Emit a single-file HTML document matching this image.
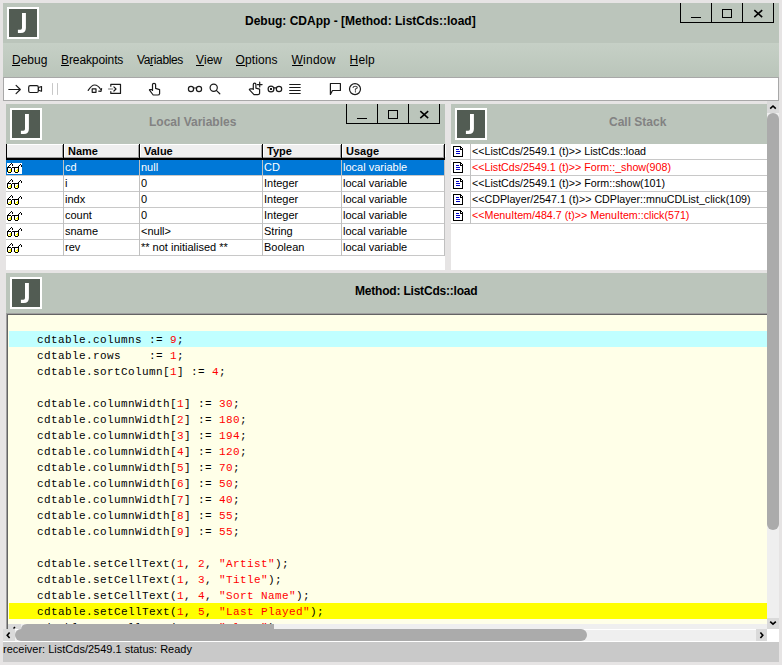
<!DOCTYPE html>
<html><head><meta charset="utf-8">
<style>
*{margin:0;padding:0;box-sizing:border-box}
html,body{width:782px;height:665px;overflow:hidden;background:#e6e4e4;font-family:"Liberation Sans",sans-serif;font-size:12px;color:#000}
.a{position:absolute}
.tb{position:absolute;background:#bbc5bb}
.jbox{position:absolute;width:32px;height:32px;border:2px solid #fff;background:#525c53}
.jbox svg{position:absolute;left:0;top:0}
.menu{position:absolute;top:53px;font-size:12px;line-height:14px;white-space:nowrap}
.menu u{text-decoration:none;position:relative}
.menu u:after{content:"";position:absolute;left:0;right:0.3px;top:12px;height:1px;background:#000}
.ptitle{position:absolute;font-weight:bold;font-size:12px;line-height:12px;color:#828282;white-space:nowrap}
.t11{position:absolute;font-size:11px;line-height:11px;white-space:nowrap}
.hd{position:absolute;font-size:11px;line-height:11px;font-weight:bold;white-space:nowrap}
.cs{position:absolute;font-size:10.7px;line-height:11px;white-space:nowrap}
.code{position:absolute;left:37px;font-family:"Liberation Mono",monospace;font-size:11px;line-height:12px;letter-spacing:0.4px;white-space:pre;color:#000}
.n{color:#f00}
</style></head>
<body>
<div class="tb" style="left:3px;top:3px;width:776px;height:40px"></div>
<div class="jbox" style="left:7px;top:7px"><svg width="28" height="28"><path d="M13 4.1H16.9V19Q16.9 24.1 11.8 24.1H8.9V20.8H11.4Q13 20.8 13 19Z" fill="#fff"/></svg></div>
<div class="a" style="left:245px;top:15px;font-weight:bold;font-size:12px;line-height:12px;white-space:nowrap">Debug: CDApp - [Method: ListCds::load]</div>
<svg class="a" style="left:680px;top:3px" width="95" height="20" shape-rendering="crispEdges"><rect x="0" y="0" width="1" height="19" fill="#000"/><rect x="31" y="0" width="1" height="19" fill="#000"/><rect x="62" y="0" width="1" height="19" fill="#000"/><rect x="93" y="0" width="1" height="19" fill="#000"/><rect x="0" y="19" width="94" height="1" fill="#000"/><rect x="11" y="14" width="10" height="1" fill="#000"/><rect x="42.5" y="6.5" width="9" height="8" fill="none" stroke="#000" stroke-width="1"/></svg>
<svg class="a" style="left:750px;top:3px" width="20" height="20"><path d="M4.3 7.2L12.2 14.2M12.2 7.2L4.3 14.2" stroke="#000" stroke-width="1.55"/></svg>
<div class="a" style="left:3px;top:43px;width:776px;height:34px;background:linear-gradient(#c6d0c6,#bac5ba)"></div>
<div class="menu" style="left:12px;letter-spacing:0px"><u>D</u>ebug</div>
<div class="menu" style="left:61px;letter-spacing:-0.1px"><u>B</u>reakpoints</div>
<div class="menu" style="left:137px;letter-spacing:-0.35px">Va<u>r</u>iables</div>
<div class="menu" style="left:196px;letter-spacing:0px"><u>V</u>iew</div>
<div class="menu" style="left:235.5px;letter-spacing:0.1px"><u>O</u>ptions</div>
<div class="menu" style="left:291.5px;letter-spacing:0.25px"><u>W</u>indow</div>
<div class="menu" style="left:349.5px;letter-spacing:0.2px"><u>H</u>elp</div>
<div class="a" style="left:3px;top:77px;width:776px;height:24px;background:#fff;border:1px solid #a8a8a8"></div>
<svg class="a" style="left:0;top:0" width="380" height="100" fill="none" stroke="#1a1a1a" stroke-width="1.2" stroke-linecap="round" stroke-linejoin="round">
<path d="M8.8 89.5H20.3M16.1 85.4L20.3 89.5L16.1 93.7"/>
<rect x="28.7" y="85.7" width="9.6" height="6.8" rx="1.5"/>
<path d="M38.5 87.5L41.5 86.5V91.2L38.5 90.2Z"/>
<path d="M52.5 83.5V94.5M57.5 83.5V94.5" stroke="#c8c8c8" stroke-width="1"/>
<path d="M88.2 90.4Q91.5 85 94.7 85Q98 85 100.5 89.3"/>
<path d="M98.8 91.2L101 91.3L101.6 88.6"/>
<rect x="92.2" y="88.9" width="3.8" height="3.4"/>
<path d="M110.8 86.2V84.3H120.5V93.4H110.8V91.6"/>
<path d="M108.6 89H112.6" stroke="#9a9a9a" stroke-width="1.4"/>
<path d="M113.9 86.9L116 89L113.9 91"/>
<path d="M152.5 90.5V84.6Q152.5 83.4 154 83.4Q155.6 83.4 155.6 84.6V88.4L159.6 89.6V93.6Q159.4 95 157.8 95H153.2L149.5 90.2V89.6H152.3"/>
<circle cx="191" cy="89" r="2.6"/><circle cx="199" cy="89" r="2.6"/><path d="M193.6 88H196.4"/>
<circle cx="213.7" cy="87.7" r="3.6"/><path d="M216.3 90.4L219.8 93.8"/>
<path d="M253.3 89.5V84.4Q253.3 83.2 254.6 83.2Q255.9 83.2 255.9 84.4V88.2L259.6 89.2V93.4Q259.4 94.6 258 94.6H254L249.3 89.6Q249.6 88.8 250.6 88.8H253.1"/>
<path d="M259.7 82.2V87M257.3 84.6H262.1"/>
<circle cx="271" cy="89" r="2.9"/><rect x="270" y="88" width="2" height="2" fill="#1a1a1a" stroke="none"/><circle cx="279" cy="89" r="2.7"/><path d="M273.9 87.8H276.3"/>
<path d="M289.7 84.5H300.2M289.7 87.5H300.2M289.7 90.5H300.2M289.7 93.5H300.2"/>
<path d="M332.5 90.5H340.4V83.5H330.4V94.4Z"/>
<circle cx="355" cy="89.1" r="5.5"/>
<path d="M353.1 87.5Q353.1 86.3 355.2 86.3Q357.3 86.3 357.3 87.5Q357.3 88.6 355.4 89V90.2M355.4 91.5V91.9" stroke="#444" stroke-width="1.1"/>
</svg>
<div class="a" style="left:6px;top:104px;width:439px;height:166px;background:#fff"></div>
<div class="tb" style="left:6px;top:104px;width:439px;height:40px"></div>
<div class="jbox" style="left:10px;top:108px"><svg width="28" height="28"><path d="M13 4.1H16.9V19Q16.9 24.1 11.8 24.1H8.9V20.8H11.4Q13 20.8 13 19Z" fill="#fff"/></svg></div>
<div class="ptitle" style="left:149px;top:116px">Local Variables</div>
<svg class="a" style="left:346px;top:104px" width="95" height="20" shape-rendering="crispEdges"><rect x="0" y="0" width="1" height="19" fill="#000"/><rect x="31" y="0" width="1" height="19" fill="#000"/><rect x="62" y="0" width="1" height="19" fill="#000"/><rect x="93" y="0" width="1" height="19" fill="#000"/><rect x="0" y="19" width="94" height="1" fill="#000"/><rect x="11" y="14" width="10" height="1" fill="#000"/><rect x="42.5" y="6.5" width="9" height="8" fill="none" stroke="#000" stroke-width="1"/></svg>
<svg class="a" style="left:416px;top:104px" width="20" height="20"><path d="M4.3 7.2L12.2 14.2M12.2 7.2L4.3 14.2" stroke="#000" stroke-width="1.55"/></svg>
<svg class="a" style="left:0;top:0" width="450" height="270" shape-rendering="crispEdges">
<rect x="6" y="144" width="439" height="16" fill="#efefef"/>
<rect x="6" y="144" width="439" height="1" fill="#fff"/>
<rect x="6" y="157" width="439" height="1" fill="#a0a0a0"/>
<rect x="6" y="158" width="439" height="2" fill="#000"/>
<rect x="6" y="144" width="1" height="15" fill="#000"/>
<rect x="62" y="145" width="1" height="13" fill="#a0a0a0"/>
<rect x="63" y="144" width="1" height="15" fill="#000"/>
<rect x="64" y="145" width="1" height="12" fill="#fff"/>
<rect x="138" y="145" width="1" height="13" fill="#a0a0a0"/>
<rect x="139" y="144" width="1" height="15" fill="#000"/>
<rect x="140" y="145" width="1" height="12" fill="#fff"/>
<rect x="261" y="145" width="1" height="13" fill="#a0a0a0"/>
<rect x="262" y="144" width="1" height="15" fill="#000"/>
<rect x="263" y="145" width="1" height="12" fill="#fff"/>
<rect x="340" y="145" width="1" height="13" fill="#a0a0a0"/>
<rect x="341" y="144" width="1" height="15" fill="#000"/>
<rect x="342" y="145" width="1" height="12" fill="#fff"/>
<rect x="443" y="145" width="1" height="13" fill="#a0a0a0"/>
<rect x="444" y="144" width="1" height="15" fill="#000"/>
<rect x="445" y="145" width="1" height="12" fill="#fff"/>
<rect x="6" y="160" width="438" height="15" fill="#0078d7"/>
<rect x="6" y="175" width="438" height="1" fill="#c8c8c8"/>
<rect x="6" y="191" width="438" height="1" fill="#c8c8c8"/>
<rect x="6" y="207" width="438" height="1" fill="#c8c8c8"/>
<rect x="6" y="223" width="438" height="1" fill="#c8c8c8"/>
<rect x="6" y="239" width="438" height="1" fill="#c8c8c8"/>
<rect x="6" y="255" width="438" height="1" fill="#c8c8c8"/>
<rect x="63" y="160" width="1" height="96" fill="#c0c0c0"/>
<rect x="139" y="160" width="1" height="96" fill="#c0c0c0"/>
<rect x="262" y="160" width="1" height="96" fill="#c0c0c0"/>
<rect x="341" y="160" width="1" height="96" fill="#c0c0c0"/>
<rect x="444" y="160" width="1" height="96" fill="#c0c0c0"/>
</svg>
<div class="hd" style="left:68px;top:146px">Name</div>
<div class="hd" style="left:144px;top:146px">Value</div>
<div class="hd" style="left:267px;top:146px">Type</div>
<div class="hd" style="left:346px;top:146px">Usage</div>
<div class="a" style="left:7px;top:163px;width:16px;height:11px"><svg width="16" height="11" shape-rendering="crispEdges"><rect x="0" y="0" width="15" height="11" fill="#fff"/><path d="M1 5h1v1h-1zM1 6h1v1h-1zM1 7h1v1h-1zM1 8h1v1h-1zM2 5h1v1h-1zM2 6h1v1h-1zM2 7h1v1h-1zM2 8h1v1h-1zM3 5h1v1h-1zM3 6h1v1h-1zM3 7h1v1h-1zM3 8h1v1h-1zM8 5h1v1h-1zM8 6h1v1h-1zM8 7h1v1h-1zM8 8h1v1h-1zM9 5h1v1h-1zM9 6h1v1h-1zM9 7h1v1h-1zM9 8h1v1h-1zM10 5h1v1h-1zM10 6h1v1h-1zM10 7h1v1h-1zM10 8h1v1h-1z" fill="#fff"/><path d="M0 4h1v1h-1zM0 5h1v1h-1zM0 6h1v1h-1zM0 7h1v1h-1zM0 8h1v1h-1zM0 4h1v1h-1zM1 4h1v1h-1zM2 4h1v1h-1zM3 4h1v1h-1zM4 5h1v1h-1zM4 6h1v1h-1zM4 7h1v1h-1zM4 8h1v1h-1zM1 9h1v1h-1zM2 9h1v1h-1zM3 9h1v1h-1zM7 4h1v1h-1zM7 5h1v1h-1zM7 6h1v1h-1zM7 7h1v1h-1zM7 8h1v1h-1zM8 4h1v1h-1zM9 4h1v1h-1zM10 4h1v1h-1zM11 3h1v1h-1zM11 4h1v1h-1zM11 5h1v1h-1zM11 6h1v1h-1zM11 7h1v1h-1zM11 8h1v1h-1zM8 9h1v1h-1zM9 9h1v1h-1zM10 9h1v1h-1zM5 4h1v1h-1zM6 4h1v1h-1zM1 3h1v1h-1zM2 2h1v1h-1zM3 1h1v1h-1zM4 0h1v1h-1zM5 1h1v1h-1zM5 2h1v1h-1zM12 2h1v1h-1zM13 1h1v1h-1zM14 2h1v1h-1zM14 3h1v1h-1z" fill="#000"/><path d="M3 6h1v1h-1zM2 7h1v1h-1zM3 7h1v1h-1zM1 8h1v1h-1zM3 8h1v1h-1zM10 6h1v1h-1zM9 7h1v1h-1zM10 7h1v1h-1zM8 8h1v1h-1zM10 8h1v1h-1z" fill="#ffff00"/></svg></div>
<div class="t11" style="left:65px;top:162px;color:#fff">cd</div>
<div class="t11" style="left:141px;top:162px;color:#fff">null</div>
<div class="t11" style="left:264px;top:162px;color:#fff">CD</div>
<div class="t11" style="left:343px;top:162px;color:#fff">local variable</div>
<div class="a" style="left:7px;top:179px;width:16px;height:11px"><svg width="16" height="11" shape-rendering="crispEdges"><path d="M1 5h1v1h-1zM1 6h1v1h-1zM1 7h1v1h-1zM1 8h1v1h-1zM2 5h1v1h-1zM2 6h1v1h-1zM2 7h1v1h-1zM2 8h1v1h-1zM3 5h1v1h-1zM3 6h1v1h-1zM3 7h1v1h-1zM3 8h1v1h-1zM8 5h1v1h-1zM8 6h1v1h-1zM8 7h1v1h-1zM8 8h1v1h-1zM9 5h1v1h-1zM9 6h1v1h-1zM9 7h1v1h-1zM9 8h1v1h-1zM10 5h1v1h-1zM10 6h1v1h-1zM10 7h1v1h-1zM10 8h1v1h-1z" fill="#fff"/><path d="M0 4h1v1h-1zM0 5h1v1h-1zM0 6h1v1h-1zM0 7h1v1h-1zM0 8h1v1h-1zM0 4h1v1h-1zM1 4h1v1h-1zM2 4h1v1h-1zM3 4h1v1h-1zM4 5h1v1h-1zM4 6h1v1h-1zM4 7h1v1h-1zM4 8h1v1h-1zM1 9h1v1h-1zM2 9h1v1h-1zM3 9h1v1h-1zM7 4h1v1h-1zM7 5h1v1h-1zM7 6h1v1h-1zM7 7h1v1h-1zM7 8h1v1h-1zM8 4h1v1h-1zM9 4h1v1h-1zM10 4h1v1h-1zM11 3h1v1h-1zM11 4h1v1h-1zM11 5h1v1h-1zM11 6h1v1h-1zM11 7h1v1h-1zM11 8h1v1h-1zM8 9h1v1h-1zM9 9h1v1h-1zM10 9h1v1h-1zM5 4h1v1h-1zM6 4h1v1h-1zM1 3h1v1h-1zM2 2h1v1h-1zM3 1h1v1h-1zM4 0h1v1h-1zM5 1h1v1h-1zM5 2h1v1h-1zM12 2h1v1h-1zM13 1h1v1h-1zM14 2h1v1h-1zM14 3h1v1h-1z" fill="#000"/><path d="M3 6h1v1h-1zM2 7h1v1h-1zM3 7h1v1h-1zM1 8h1v1h-1zM3 8h1v1h-1zM10 6h1v1h-1zM9 7h1v1h-1zM10 7h1v1h-1zM8 8h1v1h-1zM10 8h1v1h-1z" fill="#ffff00"/></svg></div>
<div class="t11" style="left:65px;top:178px;color:#000">i</div>
<div class="t11" style="left:141px;top:178px;color:#000">0</div>
<div class="t11" style="left:264px;top:178px;color:#000">Integer</div>
<div class="t11" style="left:343px;top:178px;color:#000">local variable</div>
<div class="a" style="left:7px;top:195px;width:16px;height:11px"><svg width="16" height="11" shape-rendering="crispEdges"><path d="M1 5h1v1h-1zM1 6h1v1h-1zM1 7h1v1h-1zM1 8h1v1h-1zM2 5h1v1h-1zM2 6h1v1h-1zM2 7h1v1h-1zM2 8h1v1h-1zM3 5h1v1h-1zM3 6h1v1h-1zM3 7h1v1h-1zM3 8h1v1h-1zM8 5h1v1h-1zM8 6h1v1h-1zM8 7h1v1h-1zM8 8h1v1h-1zM9 5h1v1h-1zM9 6h1v1h-1zM9 7h1v1h-1zM9 8h1v1h-1zM10 5h1v1h-1zM10 6h1v1h-1zM10 7h1v1h-1zM10 8h1v1h-1z" fill="#fff"/><path d="M0 4h1v1h-1zM0 5h1v1h-1zM0 6h1v1h-1zM0 7h1v1h-1zM0 8h1v1h-1zM0 4h1v1h-1zM1 4h1v1h-1zM2 4h1v1h-1zM3 4h1v1h-1zM4 5h1v1h-1zM4 6h1v1h-1zM4 7h1v1h-1zM4 8h1v1h-1zM1 9h1v1h-1zM2 9h1v1h-1zM3 9h1v1h-1zM7 4h1v1h-1zM7 5h1v1h-1zM7 6h1v1h-1zM7 7h1v1h-1zM7 8h1v1h-1zM8 4h1v1h-1zM9 4h1v1h-1zM10 4h1v1h-1zM11 3h1v1h-1zM11 4h1v1h-1zM11 5h1v1h-1zM11 6h1v1h-1zM11 7h1v1h-1zM11 8h1v1h-1zM8 9h1v1h-1zM9 9h1v1h-1zM10 9h1v1h-1zM5 4h1v1h-1zM6 4h1v1h-1zM1 3h1v1h-1zM2 2h1v1h-1zM3 1h1v1h-1zM4 0h1v1h-1zM5 1h1v1h-1zM5 2h1v1h-1zM12 2h1v1h-1zM13 1h1v1h-1zM14 2h1v1h-1zM14 3h1v1h-1z" fill="#000"/><path d="M3 6h1v1h-1zM2 7h1v1h-1zM3 7h1v1h-1zM1 8h1v1h-1zM3 8h1v1h-1zM10 6h1v1h-1zM9 7h1v1h-1zM10 7h1v1h-1zM8 8h1v1h-1zM10 8h1v1h-1z" fill="#ffff00"/></svg></div>
<div class="t11" style="left:65px;top:194px;color:#000">indx</div>
<div class="t11" style="left:141px;top:194px;color:#000">0</div>
<div class="t11" style="left:264px;top:194px;color:#000">Integer</div>
<div class="t11" style="left:343px;top:194px;color:#000">local variable</div>
<div class="a" style="left:7px;top:211px;width:16px;height:11px"><svg width="16" height="11" shape-rendering="crispEdges"><path d="M1 5h1v1h-1zM1 6h1v1h-1zM1 7h1v1h-1zM1 8h1v1h-1zM2 5h1v1h-1zM2 6h1v1h-1zM2 7h1v1h-1zM2 8h1v1h-1zM3 5h1v1h-1zM3 6h1v1h-1zM3 7h1v1h-1zM3 8h1v1h-1zM8 5h1v1h-1zM8 6h1v1h-1zM8 7h1v1h-1zM8 8h1v1h-1zM9 5h1v1h-1zM9 6h1v1h-1zM9 7h1v1h-1zM9 8h1v1h-1zM10 5h1v1h-1zM10 6h1v1h-1zM10 7h1v1h-1zM10 8h1v1h-1z" fill="#fff"/><path d="M0 4h1v1h-1zM0 5h1v1h-1zM0 6h1v1h-1zM0 7h1v1h-1zM0 8h1v1h-1zM0 4h1v1h-1zM1 4h1v1h-1zM2 4h1v1h-1zM3 4h1v1h-1zM4 5h1v1h-1zM4 6h1v1h-1zM4 7h1v1h-1zM4 8h1v1h-1zM1 9h1v1h-1zM2 9h1v1h-1zM3 9h1v1h-1zM7 4h1v1h-1zM7 5h1v1h-1zM7 6h1v1h-1zM7 7h1v1h-1zM7 8h1v1h-1zM8 4h1v1h-1zM9 4h1v1h-1zM10 4h1v1h-1zM11 3h1v1h-1zM11 4h1v1h-1zM11 5h1v1h-1zM11 6h1v1h-1zM11 7h1v1h-1zM11 8h1v1h-1zM8 9h1v1h-1zM9 9h1v1h-1zM10 9h1v1h-1zM5 4h1v1h-1zM6 4h1v1h-1zM1 3h1v1h-1zM2 2h1v1h-1zM3 1h1v1h-1zM4 0h1v1h-1zM5 1h1v1h-1zM5 2h1v1h-1zM12 2h1v1h-1zM13 1h1v1h-1zM14 2h1v1h-1zM14 3h1v1h-1z" fill="#000"/><path d="M3 6h1v1h-1zM2 7h1v1h-1zM3 7h1v1h-1zM1 8h1v1h-1zM3 8h1v1h-1zM10 6h1v1h-1zM9 7h1v1h-1zM10 7h1v1h-1zM8 8h1v1h-1zM10 8h1v1h-1z" fill="#ffff00"/></svg></div>
<div class="t11" style="left:65px;top:210px;color:#000">count</div>
<div class="t11" style="left:141px;top:210px;color:#000">0</div>
<div class="t11" style="left:264px;top:210px;color:#000">Integer</div>
<div class="t11" style="left:343px;top:210px;color:#000">local variable</div>
<div class="a" style="left:7px;top:227px;width:16px;height:11px"><svg width="16" height="11" shape-rendering="crispEdges"><path d="M1 5h1v1h-1zM1 6h1v1h-1zM1 7h1v1h-1zM1 8h1v1h-1zM2 5h1v1h-1zM2 6h1v1h-1zM2 7h1v1h-1zM2 8h1v1h-1zM3 5h1v1h-1zM3 6h1v1h-1zM3 7h1v1h-1zM3 8h1v1h-1zM8 5h1v1h-1zM8 6h1v1h-1zM8 7h1v1h-1zM8 8h1v1h-1zM9 5h1v1h-1zM9 6h1v1h-1zM9 7h1v1h-1zM9 8h1v1h-1zM10 5h1v1h-1zM10 6h1v1h-1zM10 7h1v1h-1zM10 8h1v1h-1z" fill="#fff"/><path d="M0 4h1v1h-1zM0 5h1v1h-1zM0 6h1v1h-1zM0 7h1v1h-1zM0 8h1v1h-1zM0 4h1v1h-1zM1 4h1v1h-1zM2 4h1v1h-1zM3 4h1v1h-1zM4 5h1v1h-1zM4 6h1v1h-1zM4 7h1v1h-1zM4 8h1v1h-1zM1 9h1v1h-1zM2 9h1v1h-1zM3 9h1v1h-1zM7 4h1v1h-1zM7 5h1v1h-1zM7 6h1v1h-1zM7 7h1v1h-1zM7 8h1v1h-1zM8 4h1v1h-1zM9 4h1v1h-1zM10 4h1v1h-1zM11 3h1v1h-1zM11 4h1v1h-1zM11 5h1v1h-1zM11 6h1v1h-1zM11 7h1v1h-1zM11 8h1v1h-1zM8 9h1v1h-1zM9 9h1v1h-1zM10 9h1v1h-1zM5 4h1v1h-1zM6 4h1v1h-1zM1 3h1v1h-1zM2 2h1v1h-1zM3 1h1v1h-1zM4 0h1v1h-1zM5 1h1v1h-1zM5 2h1v1h-1zM12 2h1v1h-1zM13 1h1v1h-1zM14 2h1v1h-1zM14 3h1v1h-1z" fill="#000"/><path d="M3 6h1v1h-1zM2 7h1v1h-1zM3 7h1v1h-1zM1 8h1v1h-1zM3 8h1v1h-1zM10 6h1v1h-1zM9 7h1v1h-1zM10 7h1v1h-1zM8 8h1v1h-1zM10 8h1v1h-1z" fill="#ffff00"/></svg></div>
<div class="t11" style="left:65px;top:226px;color:#000">sname</div>
<div class="t11" style="left:141px;top:226px;color:#000">&lt;null&gt;</div>
<div class="t11" style="left:264px;top:226px;color:#000">String</div>
<div class="t11" style="left:343px;top:226px;color:#000">local variable</div>
<div class="a" style="left:7px;top:243px;width:16px;height:11px"><svg width="16" height="11" shape-rendering="crispEdges"><path d="M1 5h1v1h-1zM1 6h1v1h-1zM1 7h1v1h-1zM1 8h1v1h-1zM2 5h1v1h-1zM2 6h1v1h-1zM2 7h1v1h-1zM2 8h1v1h-1zM3 5h1v1h-1zM3 6h1v1h-1zM3 7h1v1h-1zM3 8h1v1h-1zM8 5h1v1h-1zM8 6h1v1h-1zM8 7h1v1h-1zM8 8h1v1h-1zM9 5h1v1h-1zM9 6h1v1h-1zM9 7h1v1h-1zM9 8h1v1h-1zM10 5h1v1h-1zM10 6h1v1h-1zM10 7h1v1h-1zM10 8h1v1h-1z" fill="#fff"/><path d="M0 4h1v1h-1zM0 5h1v1h-1zM0 6h1v1h-1zM0 7h1v1h-1zM0 8h1v1h-1zM0 4h1v1h-1zM1 4h1v1h-1zM2 4h1v1h-1zM3 4h1v1h-1zM4 5h1v1h-1zM4 6h1v1h-1zM4 7h1v1h-1zM4 8h1v1h-1zM1 9h1v1h-1zM2 9h1v1h-1zM3 9h1v1h-1zM7 4h1v1h-1zM7 5h1v1h-1zM7 6h1v1h-1zM7 7h1v1h-1zM7 8h1v1h-1zM8 4h1v1h-1zM9 4h1v1h-1zM10 4h1v1h-1zM11 3h1v1h-1zM11 4h1v1h-1zM11 5h1v1h-1zM11 6h1v1h-1zM11 7h1v1h-1zM11 8h1v1h-1zM8 9h1v1h-1zM9 9h1v1h-1zM10 9h1v1h-1zM5 4h1v1h-1zM6 4h1v1h-1zM1 3h1v1h-1zM2 2h1v1h-1zM3 1h1v1h-1zM4 0h1v1h-1zM5 1h1v1h-1zM5 2h1v1h-1zM12 2h1v1h-1zM13 1h1v1h-1zM14 2h1v1h-1zM14 3h1v1h-1z" fill="#000"/><path d="M3 6h1v1h-1zM2 7h1v1h-1zM3 7h1v1h-1zM1 8h1v1h-1zM3 8h1v1h-1zM10 6h1v1h-1zM9 7h1v1h-1zM10 7h1v1h-1zM8 8h1v1h-1zM10 8h1v1h-1z" fill="#ffff00"/></svg></div>
<div class="t11" style="left:65px;top:242px;color:#000">rev</div>
<div class="t11" style="left:141px;top:242px;color:#000">** not initialised **</div>
<div class="t11" style="left:264px;top:242px;color:#000">Boolean</div>
<div class="t11" style="left:343px;top:242px;color:#000">local variable</div>
<div class="a" style="left:451px;top:104px;width:316px;height:166px;background:#fff"></div>
<div class="tb" style="left:451px;top:104px;width:316px;height:40px"></div>
<div class="jbox" style="left:455px;top:108px"><svg width="28" height="28"><path d="M13 4.1H16.9V19Q16.9 24.1 11.8 24.1H8.9V20.8H11.4Q13 20.8 13 19Z" fill="#fff"/></svg></div>
<div class="ptitle" style="left:609px;top:116px">Call Stack</div>
<svg class="a" style="left:0;top:0" width="770" height="270" shape-rendering="crispEdges">
<rect x="451" y="159" width="316" height="1" fill="#c8c8c8"/>
<rect x="451" y="175" width="316" height="1" fill="#c8c8c8"/>
<rect x="451" y="191" width="316" height="1" fill="#c8c8c8"/>
<rect x="451" y="207" width="316" height="1" fill="#c8c8c8"/>
<rect x="451" y="223" width="316" height="1" fill="#c8c8c8"/>
<rect x="470" y="144" width="1" height="80" fill="#c0c0c0"/>
</svg>
<div class="a" style="left:451px;top:144px"><svg width="13" height="13" shape-rendering="crispEdges"><path d="M3 3h1v1h-1zM3 4h1v1h-1zM3 5h1v1h-1zM3 6h1v1h-1zM3 7h1v1h-1zM3 8h1v1h-1zM3 9h1v1h-1zM3 10h1v1h-1zM3 11h1v1h-1zM4 3h1v1h-1zM4 4h1v1h-1zM4 5h1v1h-1zM4 6h1v1h-1zM4 7h1v1h-1zM4 8h1v1h-1zM4 9h1v1h-1zM4 10h1v1h-1zM4 11h1v1h-1zM5 3h1v1h-1zM5 4h1v1h-1zM5 5h1v1h-1zM5 6h1v1h-1zM5 7h1v1h-1zM5 8h1v1h-1zM5 9h1v1h-1zM5 10h1v1h-1zM5 11h1v1h-1zM6 3h1v1h-1zM6 4h1v1h-1zM6 5h1v1h-1zM6 6h1v1h-1zM6 7h1v1h-1zM6 8h1v1h-1zM6 9h1v1h-1zM6 10h1v1h-1zM6 11h1v1h-1zM7 3h1v1h-1zM7 4h1v1h-1zM7 5h1v1h-1zM7 6h1v1h-1zM7 7h1v1h-1zM7 8h1v1h-1zM7 9h1v1h-1zM7 10h1v1h-1zM7 11h1v1h-1zM8 3h1v1h-1zM8 4h1v1h-1zM8 5h1v1h-1zM8 6h1v1h-1zM8 7h1v1h-1zM8 8h1v1h-1zM8 9h1v1h-1zM8 10h1v1h-1zM8 11h1v1h-1zM9 3h1v1h-1zM9 4h1v1h-1zM9 5h1v1h-1zM9 6h1v1h-1zM9 7h1v1h-1zM9 8h1v1h-1zM9 9h1v1h-1zM9 10h1v1h-1zM9 11h1v1h-1zM10 3h1v1h-1zM10 4h1v1h-1zM10 5h1v1h-1zM10 6h1v1h-1zM10 7h1v1h-1zM10 8h1v1h-1zM10 9h1v1h-1zM10 10h1v1h-1zM10 11h1v1h-1z" fill="#fff"/><path d="M2 2h1v1h-1zM2 3h1v1h-1zM2 4h1v1h-1zM2 5h1v1h-1zM2 6h1v1h-1zM2 7h1v1h-1zM2 8h1v1h-1zM2 9h1v1h-1zM2 10h1v1h-1zM2 11h1v1h-1zM2 12h1v1h-1zM2 2h1v1h-1zM3 2h1v1h-1zM4 2h1v1h-1zM5 2h1v1h-1zM6 2h1v1h-1zM7 2h1v1h-1zM8 2h1v1h-1zM9 2h1v1h-1zM10 3h1v1h-1zM11 4h1v1h-1zM11 5h1v1h-1zM11 6h1v1h-1zM11 7h1v1h-1zM11 8h1v1h-1zM11 9h1v1h-1zM11 10h1v1h-1zM11 11h1v1h-1zM11 12h1v1h-1zM2 12h1v1h-1zM3 12h1v1h-1zM4 12h1v1h-1zM5 12h1v1h-1zM6 12h1v1h-1zM7 12h1v1h-1zM8 12h1v1h-1zM9 12h1v1h-1zM10 12h1v1h-1zM11 12h1v1h-1zM9 3h1v1h-1zM9 4h1v1h-1zM9 5h1v1h-1zM10 5h1v1h-1z" fill="#000"/><path d="M5 5h1v1h-1zM6 5h1v1h-1zM7 5h1v1h-1zM5 7h1v1h-1zM6 7h1v1h-1zM7 7h1v1h-1zM8 7h1v1h-1zM5 9h1v1h-1zM6 9h1v1h-1zM7 9h1v1h-1zM8 9h1v1h-1z" fill="#0000c8"/></svg></div>
<div class="cs" style="left:472px;top:146px;color:#000">&lt;&lt;ListCds/2549.1 (t)&gt;&gt; ListCds::load</div>
<div class="a" style="left:451px;top:160px"><svg width="13" height="13" shape-rendering="crispEdges"><path d="M3 3h1v1h-1zM3 4h1v1h-1zM3 5h1v1h-1zM3 6h1v1h-1zM3 7h1v1h-1zM3 8h1v1h-1zM3 9h1v1h-1zM3 10h1v1h-1zM3 11h1v1h-1zM4 3h1v1h-1zM4 4h1v1h-1zM4 5h1v1h-1zM4 6h1v1h-1zM4 7h1v1h-1zM4 8h1v1h-1zM4 9h1v1h-1zM4 10h1v1h-1zM4 11h1v1h-1zM5 3h1v1h-1zM5 4h1v1h-1zM5 5h1v1h-1zM5 6h1v1h-1zM5 7h1v1h-1zM5 8h1v1h-1zM5 9h1v1h-1zM5 10h1v1h-1zM5 11h1v1h-1zM6 3h1v1h-1zM6 4h1v1h-1zM6 5h1v1h-1zM6 6h1v1h-1zM6 7h1v1h-1zM6 8h1v1h-1zM6 9h1v1h-1zM6 10h1v1h-1zM6 11h1v1h-1zM7 3h1v1h-1zM7 4h1v1h-1zM7 5h1v1h-1zM7 6h1v1h-1zM7 7h1v1h-1zM7 8h1v1h-1zM7 9h1v1h-1zM7 10h1v1h-1zM7 11h1v1h-1zM8 3h1v1h-1zM8 4h1v1h-1zM8 5h1v1h-1zM8 6h1v1h-1zM8 7h1v1h-1zM8 8h1v1h-1zM8 9h1v1h-1zM8 10h1v1h-1zM8 11h1v1h-1zM9 3h1v1h-1zM9 4h1v1h-1zM9 5h1v1h-1zM9 6h1v1h-1zM9 7h1v1h-1zM9 8h1v1h-1zM9 9h1v1h-1zM9 10h1v1h-1zM9 11h1v1h-1zM10 3h1v1h-1zM10 4h1v1h-1zM10 5h1v1h-1zM10 6h1v1h-1zM10 7h1v1h-1zM10 8h1v1h-1zM10 9h1v1h-1zM10 10h1v1h-1zM10 11h1v1h-1z" fill="#fff"/><path d="M2 2h1v1h-1zM2 3h1v1h-1zM2 4h1v1h-1zM2 5h1v1h-1zM2 6h1v1h-1zM2 7h1v1h-1zM2 8h1v1h-1zM2 9h1v1h-1zM2 10h1v1h-1zM2 11h1v1h-1zM2 12h1v1h-1zM2 2h1v1h-1zM3 2h1v1h-1zM4 2h1v1h-1zM5 2h1v1h-1zM6 2h1v1h-1zM7 2h1v1h-1zM8 2h1v1h-1zM9 2h1v1h-1zM10 3h1v1h-1zM11 4h1v1h-1zM11 5h1v1h-1zM11 6h1v1h-1zM11 7h1v1h-1zM11 8h1v1h-1zM11 9h1v1h-1zM11 10h1v1h-1zM11 11h1v1h-1zM11 12h1v1h-1zM2 12h1v1h-1zM3 12h1v1h-1zM4 12h1v1h-1zM5 12h1v1h-1zM6 12h1v1h-1zM7 12h1v1h-1zM8 12h1v1h-1zM9 12h1v1h-1zM10 12h1v1h-1zM11 12h1v1h-1zM9 3h1v1h-1zM9 4h1v1h-1zM9 5h1v1h-1zM10 5h1v1h-1z" fill="#000"/><path d="M5 5h1v1h-1zM6 5h1v1h-1zM7 5h1v1h-1zM5 7h1v1h-1zM6 7h1v1h-1zM7 7h1v1h-1zM8 7h1v1h-1zM5 9h1v1h-1zM6 9h1v1h-1zM7 9h1v1h-1zM8 9h1v1h-1z" fill="#0000c8"/></svg></div>
<div class="cs" style="left:472px;top:162px;color:#ff0000">&lt;&lt;ListCds/2549.1 (t)&gt;&gt; Form::_show(908)</div>
<div class="a" style="left:451px;top:176px"><svg width="13" height="13" shape-rendering="crispEdges"><path d="M3 3h1v1h-1zM3 4h1v1h-1zM3 5h1v1h-1zM3 6h1v1h-1zM3 7h1v1h-1zM3 8h1v1h-1zM3 9h1v1h-1zM3 10h1v1h-1zM3 11h1v1h-1zM4 3h1v1h-1zM4 4h1v1h-1zM4 5h1v1h-1zM4 6h1v1h-1zM4 7h1v1h-1zM4 8h1v1h-1zM4 9h1v1h-1zM4 10h1v1h-1zM4 11h1v1h-1zM5 3h1v1h-1zM5 4h1v1h-1zM5 5h1v1h-1zM5 6h1v1h-1zM5 7h1v1h-1zM5 8h1v1h-1zM5 9h1v1h-1zM5 10h1v1h-1zM5 11h1v1h-1zM6 3h1v1h-1zM6 4h1v1h-1zM6 5h1v1h-1zM6 6h1v1h-1zM6 7h1v1h-1zM6 8h1v1h-1zM6 9h1v1h-1zM6 10h1v1h-1zM6 11h1v1h-1zM7 3h1v1h-1zM7 4h1v1h-1zM7 5h1v1h-1zM7 6h1v1h-1zM7 7h1v1h-1zM7 8h1v1h-1zM7 9h1v1h-1zM7 10h1v1h-1zM7 11h1v1h-1zM8 3h1v1h-1zM8 4h1v1h-1zM8 5h1v1h-1zM8 6h1v1h-1zM8 7h1v1h-1zM8 8h1v1h-1zM8 9h1v1h-1zM8 10h1v1h-1zM8 11h1v1h-1zM9 3h1v1h-1zM9 4h1v1h-1zM9 5h1v1h-1zM9 6h1v1h-1zM9 7h1v1h-1zM9 8h1v1h-1zM9 9h1v1h-1zM9 10h1v1h-1zM9 11h1v1h-1zM10 3h1v1h-1zM10 4h1v1h-1zM10 5h1v1h-1zM10 6h1v1h-1zM10 7h1v1h-1zM10 8h1v1h-1zM10 9h1v1h-1zM10 10h1v1h-1zM10 11h1v1h-1z" fill="#fff"/><path d="M2 2h1v1h-1zM2 3h1v1h-1zM2 4h1v1h-1zM2 5h1v1h-1zM2 6h1v1h-1zM2 7h1v1h-1zM2 8h1v1h-1zM2 9h1v1h-1zM2 10h1v1h-1zM2 11h1v1h-1zM2 12h1v1h-1zM2 2h1v1h-1zM3 2h1v1h-1zM4 2h1v1h-1zM5 2h1v1h-1zM6 2h1v1h-1zM7 2h1v1h-1zM8 2h1v1h-1zM9 2h1v1h-1zM10 3h1v1h-1zM11 4h1v1h-1zM11 5h1v1h-1zM11 6h1v1h-1zM11 7h1v1h-1zM11 8h1v1h-1zM11 9h1v1h-1zM11 10h1v1h-1zM11 11h1v1h-1zM11 12h1v1h-1zM2 12h1v1h-1zM3 12h1v1h-1zM4 12h1v1h-1zM5 12h1v1h-1zM6 12h1v1h-1zM7 12h1v1h-1zM8 12h1v1h-1zM9 12h1v1h-1zM10 12h1v1h-1zM11 12h1v1h-1zM9 3h1v1h-1zM9 4h1v1h-1zM9 5h1v1h-1zM10 5h1v1h-1z" fill="#000"/><path d="M5 5h1v1h-1zM6 5h1v1h-1zM7 5h1v1h-1zM5 7h1v1h-1zM6 7h1v1h-1zM7 7h1v1h-1zM8 7h1v1h-1zM5 9h1v1h-1zM6 9h1v1h-1zM7 9h1v1h-1zM8 9h1v1h-1z" fill="#0000c8"/></svg></div>
<div class="cs" style="left:472px;top:178px;color:#000">&lt;&lt;ListCds/2549.1 (t)&gt;&gt; Form::show(101)</div>
<div class="a" style="left:451px;top:192px"><svg width="13" height="13" shape-rendering="crispEdges"><path d="M3 3h1v1h-1zM3 4h1v1h-1zM3 5h1v1h-1zM3 6h1v1h-1zM3 7h1v1h-1zM3 8h1v1h-1zM3 9h1v1h-1zM3 10h1v1h-1zM3 11h1v1h-1zM4 3h1v1h-1zM4 4h1v1h-1zM4 5h1v1h-1zM4 6h1v1h-1zM4 7h1v1h-1zM4 8h1v1h-1zM4 9h1v1h-1zM4 10h1v1h-1zM4 11h1v1h-1zM5 3h1v1h-1zM5 4h1v1h-1zM5 5h1v1h-1zM5 6h1v1h-1zM5 7h1v1h-1zM5 8h1v1h-1zM5 9h1v1h-1zM5 10h1v1h-1zM5 11h1v1h-1zM6 3h1v1h-1zM6 4h1v1h-1zM6 5h1v1h-1zM6 6h1v1h-1zM6 7h1v1h-1zM6 8h1v1h-1zM6 9h1v1h-1zM6 10h1v1h-1zM6 11h1v1h-1zM7 3h1v1h-1zM7 4h1v1h-1zM7 5h1v1h-1zM7 6h1v1h-1zM7 7h1v1h-1zM7 8h1v1h-1zM7 9h1v1h-1zM7 10h1v1h-1zM7 11h1v1h-1zM8 3h1v1h-1zM8 4h1v1h-1zM8 5h1v1h-1zM8 6h1v1h-1zM8 7h1v1h-1zM8 8h1v1h-1zM8 9h1v1h-1zM8 10h1v1h-1zM8 11h1v1h-1zM9 3h1v1h-1zM9 4h1v1h-1zM9 5h1v1h-1zM9 6h1v1h-1zM9 7h1v1h-1zM9 8h1v1h-1zM9 9h1v1h-1zM9 10h1v1h-1zM9 11h1v1h-1zM10 3h1v1h-1zM10 4h1v1h-1zM10 5h1v1h-1zM10 6h1v1h-1zM10 7h1v1h-1zM10 8h1v1h-1zM10 9h1v1h-1zM10 10h1v1h-1zM10 11h1v1h-1z" fill="#fff"/><path d="M2 2h1v1h-1zM2 3h1v1h-1zM2 4h1v1h-1zM2 5h1v1h-1zM2 6h1v1h-1zM2 7h1v1h-1zM2 8h1v1h-1zM2 9h1v1h-1zM2 10h1v1h-1zM2 11h1v1h-1zM2 12h1v1h-1zM2 2h1v1h-1zM3 2h1v1h-1zM4 2h1v1h-1zM5 2h1v1h-1zM6 2h1v1h-1zM7 2h1v1h-1zM8 2h1v1h-1zM9 2h1v1h-1zM10 3h1v1h-1zM11 4h1v1h-1zM11 5h1v1h-1zM11 6h1v1h-1zM11 7h1v1h-1zM11 8h1v1h-1zM11 9h1v1h-1zM11 10h1v1h-1zM11 11h1v1h-1zM11 12h1v1h-1zM2 12h1v1h-1zM3 12h1v1h-1zM4 12h1v1h-1zM5 12h1v1h-1zM6 12h1v1h-1zM7 12h1v1h-1zM8 12h1v1h-1zM9 12h1v1h-1zM10 12h1v1h-1zM11 12h1v1h-1zM9 3h1v1h-1zM9 4h1v1h-1zM9 5h1v1h-1zM10 5h1v1h-1z" fill="#000"/><path d="M5 5h1v1h-1zM6 5h1v1h-1zM7 5h1v1h-1zM5 7h1v1h-1zM6 7h1v1h-1zM7 7h1v1h-1zM8 7h1v1h-1zM5 9h1v1h-1zM6 9h1v1h-1zM7 9h1v1h-1zM8 9h1v1h-1z" fill="#0000c8"/></svg></div>
<div class="cs" style="left:472px;top:194px;color:#000">&lt;&lt;CDPlayer/2547.1 (t)&gt;&gt; CDPlayer::mnuCDList_click(109)</div>
<div class="a" style="left:451px;top:208px"><svg width="13" height="13" shape-rendering="crispEdges"><path d="M3 3h1v1h-1zM3 4h1v1h-1zM3 5h1v1h-1zM3 6h1v1h-1zM3 7h1v1h-1zM3 8h1v1h-1zM3 9h1v1h-1zM3 10h1v1h-1zM3 11h1v1h-1zM4 3h1v1h-1zM4 4h1v1h-1zM4 5h1v1h-1zM4 6h1v1h-1zM4 7h1v1h-1zM4 8h1v1h-1zM4 9h1v1h-1zM4 10h1v1h-1zM4 11h1v1h-1zM5 3h1v1h-1zM5 4h1v1h-1zM5 5h1v1h-1zM5 6h1v1h-1zM5 7h1v1h-1zM5 8h1v1h-1zM5 9h1v1h-1zM5 10h1v1h-1zM5 11h1v1h-1zM6 3h1v1h-1zM6 4h1v1h-1zM6 5h1v1h-1zM6 6h1v1h-1zM6 7h1v1h-1zM6 8h1v1h-1zM6 9h1v1h-1zM6 10h1v1h-1zM6 11h1v1h-1zM7 3h1v1h-1zM7 4h1v1h-1zM7 5h1v1h-1zM7 6h1v1h-1zM7 7h1v1h-1zM7 8h1v1h-1zM7 9h1v1h-1zM7 10h1v1h-1zM7 11h1v1h-1zM8 3h1v1h-1zM8 4h1v1h-1zM8 5h1v1h-1zM8 6h1v1h-1zM8 7h1v1h-1zM8 8h1v1h-1zM8 9h1v1h-1zM8 10h1v1h-1zM8 11h1v1h-1zM9 3h1v1h-1zM9 4h1v1h-1zM9 5h1v1h-1zM9 6h1v1h-1zM9 7h1v1h-1zM9 8h1v1h-1zM9 9h1v1h-1zM9 10h1v1h-1zM9 11h1v1h-1zM10 3h1v1h-1zM10 4h1v1h-1zM10 5h1v1h-1zM10 6h1v1h-1zM10 7h1v1h-1zM10 8h1v1h-1zM10 9h1v1h-1zM10 10h1v1h-1zM10 11h1v1h-1z" fill="#fff"/><path d="M2 2h1v1h-1zM2 3h1v1h-1zM2 4h1v1h-1zM2 5h1v1h-1zM2 6h1v1h-1zM2 7h1v1h-1zM2 8h1v1h-1zM2 9h1v1h-1zM2 10h1v1h-1zM2 11h1v1h-1zM2 12h1v1h-1zM2 2h1v1h-1zM3 2h1v1h-1zM4 2h1v1h-1zM5 2h1v1h-1zM6 2h1v1h-1zM7 2h1v1h-1zM8 2h1v1h-1zM9 2h1v1h-1zM10 3h1v1h-1zM11 4h1v1h-1zM11 5h1v1h-1zM11 6h1v1h-1zM11 7h1v1h-1zM11 8h1v1h-1zM11 9h1v1h-1zM11 10h1v1h-1zM11 11h1v1h-1zM11 12h1v1h-1zM2 12h1v1h-1zM3 12h1v1h-1zM4 12h1v1h-1zM5 12h1v1h-1zM6 12h1v1h-1zM7 12h1v1h-1zM8 12h1v1h-1zM9 12h1v1h-1zM10 12h1v1h-1zM11 12h1v1h-1zM9 3h1v1h-1zM9 4h1v1h-1zM9 5h1v1h-1zM10 5h1v1h-1z" fill="#000"/><path d="M5 5h1v1h-1zM6 5h1v1h-1zM7 5h1v1h-1zM5 7h1v1h-1zM6 7h1v1h-1zM7 7h1v1h-1zM8 7h1v1h-1zM5 9h1v1h-1zM6 9h1v1h-1zM7 9h1v1h-1zM8 9h1v1h-1z" fill="#0000c8"/></svg></div>
<div class="cs" style="left:472px;top:210px;color:#ff0000">&lt;&lt;MenuItem/484.7 (t)&gt;&gt; MenuItem::click(571)</div>
<div class="tb" style="left:6px;top:273px;width:761px;height:40px"></div>
<div class="jbox" style="left:10px;top:277px"><svg width="28" height="28"><path d="M13 4.1H16.9V19Q16.9 24.1 11.8 24.1H8.9V20.8H11.4Q13 20.8 13 19Z" fill="#fff"/></svg></div>
<div class="ptitle" style="left:355px;top:285px;color:#000;letter-spacing:-0.2px">Method: ListCds::load</div>
<div class="a" style="left:6px;top:313px;width:761px;height:316px;background:#ffffe8;border-left:1px solid #a0a0a0;border-top:1px solid #a0a0a0;box-shadow:inset 1px 1px 0 #646464"></div>
<div class="a" style="left:9px;top:331px;width:758px;height:16px;background:#c0ffff"></div>
<div class="a" style="left:9px;top:603px;width:758px;height:16px;background:#ffff00"></div>
<div class="code" style="top:334px">cdtable.columns := <span class="n">9</span>;</div>
<div class="code" style="top:350px">cdtable.rows    := <span class="n">1</span>;</div>
<div class="code" style="top:366px">cdtable.sortColumn[<span class="n">1</span>] := <span class="n">4</span>;</div>
<div class="code" style="top:398px">cdtable.columnWidth[<span class="n">1</span>] := <span class="n">30</span>;</div>
<div class="code" style="top:414px">cdtable.columnWidth[<span class="n">2</span>] := <span class="n">180</span>;</div>
<div class="code" style="top:430px">cdtable.columnWidth[<span class="n">3</span>] := <span class="n">194</span>;</div>
<div class="code" style="top:446px">cdtable.columnWidth[<span class="n">4</span>] := <span class="n">120</span>;</div>
<div class="code" style="top:462px">cdtable.columnWidth[<span class="n">5</span>] := <span class="n">70</span>;</div>
<div class="code" style="top:478px">cdtable.columnWidth[<span class="n">6</span>] := <span class="n">50</span>;</div>
<div class="code" style="top:494px">cdtable.columnWidth[<span class="n">7</span>] := <span class="n">40</span>;</div>
<div class="code" style="top:510px">cdtable.columnWidth[<span class="n">8</span>] := <span class="n">55</span>;</div>
<div class="code" style="top:526px">cdtable.columnWidth[<span class="n">9</span>] := <span class="n">55</span>;</div>
<div class="code" style="top:558px">cdtable.setCellText(<span class="n">1</span>, <span class="n">2</span>, <span class="n">&quot;Artist&quot;</span>);</div>
<div class="code" style="top:574px">cdtable.setCellText(<span class="n">1</span>, <span class="n">3</span>, <span class="n">&quot;Title&quot;</span>);</div>
<div class="code" style="top:590px">cdtable.setCellText(<span class="n">1</span>, <span class="n">4</span>, <span class="n">&quot;Sort Name&quot;</span>);</div>
<div class="code" style="top:606px">cdtable.setCellText(<span class="n">1</span>, <span class="n">5</span>, <span class="n">&quot;Last Played&quot;</span>);</div>
<div class="code" style="top:622px">cdtable.setCellText(<span class="n">1</span>, <span class="n">6</span>, <span class="n">&quot;Plays&quot;</span>);</div>
<svg class="a" style="left:0;top:0" width="782" height="665">
<rect x="767" y="101" width="12" height="528" fill="#efefef" shape-rendering="crispEdges"/>
<rect x="767" y="101" width="12" height="12" fill="#dadada" shape-rendering="crispEdges"/>
<path d="M770.2 108.6L773 106L775.8 108.6" fill="none" stroke="#000" stroke-width="1.6"/>
<rect x="767" y="113" width="12" height="417" rx="6" fill="#ababab"/>
<rect x="767" y="618" width="12" height="11" fill="#dadada" shape-rendering="crispEdges"/>
<path d="M770.2 621.6L773 624.2L775.8 621.6" fill="none" stroke="#000" stroke-width="1.6"/>
<rect x="8" y="624" width="759" height="5" fill="#efefef" shape-rendering="crispEdges"/>
<rect x="8" y="624" width="13" height="5" fill="#dadada" shape-rendering="crispEdges"/>
<path d="M13.5 628.5L15 627" fill="none" stroke="#000" stroke-width="1.5"/>
<path d="M21 629V630Q21 624 27 624H274V629Z" fill="#ababab"/>
<rect x="3" y="629" width="764" height="12" fill="#efefef" shape-rendering="crispEdges"/>
<rect x="15" y="629" width="752" height="1" fill="#fff" shape-rendering="crispEdges"/>
<rect x="3" y="629" width="12" height="12" fill="#dadada" shape-rendering="crispEdges"/>
<path d="M9.6 632.5L7.2 635.2L9.6 638" fill="none" stroke="#000" stroke-width="1.6"/>
<rect x="15" y="629" width="572" height="12" rx="6" fill="#ababab"/>
<rect x="756" y="629" width="11" height="12" fill="#dadada" shape-rendering="crispEdges"/>
<path d="M760.4 632.5L762.8 635.2L760.4 638" fill="none" stroke="#000" stroke-width="1.6"/>
<rect x="767" y="629" width="12" height="12" fill="#fff" shape-rendering="crispEdges"/>
<rect x="3" y="641" width="776" height="1" fill="#fff" shape-rendering="crispEdges"/>
</svg>
<div class="a" style="left:3px;top:642px;width:776px;height:20px;background:#c9c9c9"></div>
<div class="a" style="left:3px;top:644px;font-size:11px;line-height:11px;white-space:nowrap">receiver: ListCds/2549.1 status: Ready</div>
</body></html>
